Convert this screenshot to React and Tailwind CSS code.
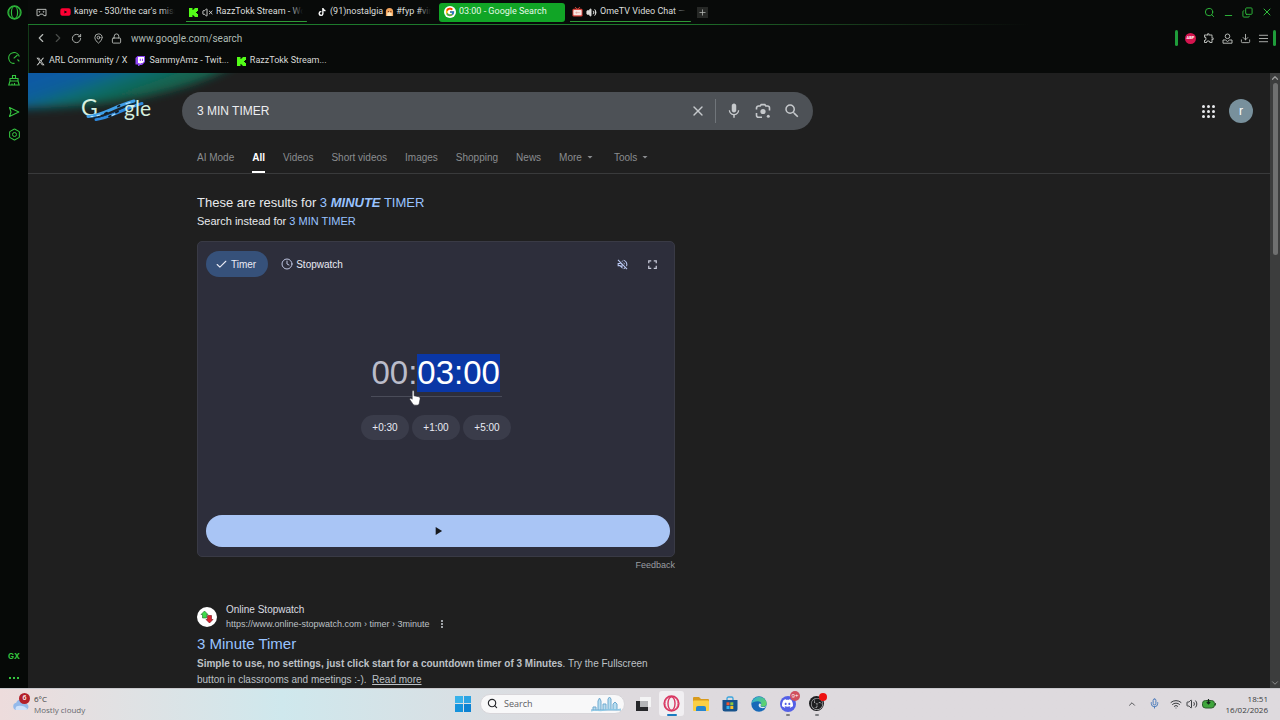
import React, { useEffect, useRef } from "react";
import {
  AlignJustify,
  Check,
  ChevronLeft,
  ChevronRight,
  ChevronUp,
  ChevronDown,
  Clock,
  Copy,
  Download,
  Hexagon,
  Lock,
  MapPin,
  Mic,
  Minus,
  Plus,
  RotateCw,
  Search,
  Volume2,
  VolumeX,
  Wifi,
  X,
} from "lucide-react";
import { FcGoogle } from "react-icons/fc";
import { FaTiktok, FaXTwitter, FaYoutube } from "react-icons/fa6";
import {
  MdArrowDropDown,
  MdFullscreen,
  MdMic,
  MdMoreVert,
  MdOutlineExtension,
  MdOutlineVolumeOff,
  MdPlayArrow,
  MdSearch,
} from "react-icons/md";
import { SiDiscord, SiObsstudio } from "react-icons/si";

const KickIcon = ({ className }) => (
  <svg viewBox="0 0 9 9" className={className} aria-hidden="true">
    <path fill="#53fc18" d="M0 0h3.500v2h1V1h1V0H9v3H8v1H7v1h1v1h1v3H5.500V8h-1V7h-1v2H0z" />
  </svg>
);

const TwitchIcon = ({ className }) => (
  <svg viewBox="0 0 10 10" className={className} aria-hidden="true">
    <path fill="#8e44f5" d="M2.500 0H10v6L7 9H5L4 10H3V8.500H.5V2z" />
    <path fill="#fff" d="M3 1h6v4.500L7.500 7H6L4.700 8.200V7H3z" />
    <path stroke="#8e44f5" d="M5.300 2.700v2.300M7.500 2.700v2.300" />
  </svg>
);

const OperaIcon = ({ className }) => (
  <svg viewBox="0 0 16 16" className={className} fill="none" stroke="currentColor" strokeWidth="1.3" aria-hidden="true">
    <circle cx="8" cy="8" r="7" />
    <ellipse cx="8" cy="8" rx="3.3" ry="6.4" />
    <path d="M5.500 1.800a7.200 7.200 0 0 0 0 12.400M10.500 1.800a7.200 7.200 0 0 1 0 12.400" strokeWidth="0.8" />
  </svg>
);

const TvIcon = ({ className }) => (
  <svg viewBox="0 0 12 11" className={className} aria-hidden="true">
    <path d="M3 0l3 2.400L9 0" stroke="#d9473f" fill="none" />
    <rect x="0.5" y="2" width="11" height="8.5" rx="1.5" fill="#d9473f" />
    <rect x="1.500" y="3.400" width="9" height="5.600" rx="0.8" fill="#f6e6e2" />
    <path d="M3.500 6.200h5M5 5v2.400" stroke="#e0988f" strokeWidth="0.7" />
  </svg>
);

const GhostIcon = ({ className }) => (
  <svg viewBox="0 0 10 10" className={className} aria-hidden="true">
    <path fill="#f2a35c" d="M1 9V4a4 4 0 0 1 8 0v5z" />
    <path fill="#fbe3b8" d="M2.500 8.800V5.500l2-1 3 1.200V8.800z" />
    <circle cx="3.800" cy="3.900" r="0.7" fill="#5b2d12" />
    <circle cx="6.500" cy="3.900" r="0.7" fill="#5b2d12" />
  </svg>
);

const GamepadIcon = ({ className }) => (
  <svg viewBox="0 0 12 10" className={className} fill="none" stroke="currentColor" strokeWidth="1.1" aria-hidden="true">
    <path d="M1 1.500h10v7H8.600L7.500 6.800h-3L3.400 8.500H1z" strokeLinejoin="round" />
    <circle cx="3.700" cy="4.200" r="0.5" />
    <circle cx="8.300" cy="4.200" r="0.5" />
  </svg>
);

const tabs = [
  { title: "kanye - 530/the car's miss", icon: <FaYoutube className="size-3 text-[#ff0033]" /> },
  {
    title: "RazzTokk Stream - Wo",
    icon: <KickIcon className="size-[9px]" />,
    sound: <VolumeX className="size-[11px] shrink-0" />,
    line: true,
  },
  { title: "(91)nostalgia", after: "#fyp #vira", icon: <FaTiktok className="size-2 text-white" /> },
  { title: "03:00 - Google Search", icon: <FcGoogle className="size-[10px]" />, active: true },
  {
    title: "OmeTV Video Chat — (",
    icon: <TvIcon className="h-[10px] w-[11px]" />,
    sound: <Volume2 className="size-[11px] shrink-0" fill="currentColor" />,
    line: true,
  },
];

const Tab = ({ tab }) => (
  <button
    className={`relative flex h-[19px] min-w-0 max-w-[126px] flex-1 items-center gap-[3px] overflow-hidden rounded-[3px] pl-[5px] text-[9px] ${
      tab.active ? "bg-[#11a526] text-[#e4fbe6]" : "text-[#dcdedc]"
    }`}
  >
    <span className={`flex shrink-0 justify-center ${tab.active ? "rounded-full bg-white p-px" : "w-[11px]"}`}>
      {tab.icon}
    </span>
    {tab.sound}
    <span className="flex items-center gap-[2px] whitespace-nowrap">
      {tab.title}
      {tab.after && (
        <>
          <GhostIcon className="size-[9px] shrink-0" />
          {tab.after}
        </>
      )}
    </span>
    {!tab.active && <span className="absolute inset-y-0 right-0 w-5 bg-gradient-to-r from-transparent to-[#080a09] to-70%" />}
    {tab.line && <span className="absolute right-[2px] bottom-0 left-[3px] h-px bg-[#2f9a36]" />}
  </button>
);

const Sidebar = () => (
  <aside className="flex w-7 shrink-0 flex-col items-center bg-[#060907] text-[#35c43f]">
    <button aria-label="Opera menu" className="mt-[5px] text-[#2fbf3c]">
      <OperaIcon className="size-[15px]" />
    </button>
    <button aria-label="GX Control" className="mt-8">
      <svg viewBox="0 0 12 12" className="size-3" fill="none" stroke="currentColor" strokeWidth="1.1">
        <path d="M11.300 4.500A5.400 5.400 0 1 0 6.500 11.400M5.700 6.300 9.500 3M9.500 7.500l1.800 1.800" />
      </svg>
    </button>
    <button aria-label="GX Cleaner" className="mt-[10px]">
      <svg viewBox="0 0 12 12" className="size-3" fill="none" stroke="currentColor" strokeWidth="1.1">
        <path d="M4.500 4.500V1.500h3v3M2 7V4.500h8V7M2 7 .8 11h10.400L10 7zM4 11V9.500M6.500 11V9" />
      </svg>
    </button>
    <button aria-label="Player" className="mt-5">
      <svg viewBox="0 0 12 12" className="size-3" fill="none" stroke="currentColor" strokeWidth="1.1" strokeLinejoin="round">
        <path d="M1.500 1.500 10.800 6l-9.300 4.500L3 6z" />
      </svg>
    </button>
    <button aria-label="Settings" className="relative mt-[10px] flex items-center justify-center">
      <Hexagon className="size-[13px]" />
      <span className="absolute size-[5px] rounded-full border border-current" />
    </button>
    <button className="mt-auto font-['Inter',sans-serif] text-[8px] leading-3 font-bold">GX</button>
    <button aria-label="More" className="mt-[14px] mb-2 flex gap-[2px] py-px">
      <span className="size-[2px] bg-current" />
      <span className="size-[2px] bg-current" />
      <span className="size-[2px] bg-current" />
    </button>
  </aside>
);

const TabStrip = () => (
  <div className="flex h-6 shrink-0 items-center">
    <button aria-label="Workspace" className="ml-2 text-[#b9bcb9]">
      <GamepadIcon className="h-[9px] w-[11px]" />
    </button>
    <div className="ml-2 flex min-w-0 max-w-[638px] flex-1 gap-[2px]">
      {tabs.map((t) => (
        <Tab key={t.title} tab={t} />
      ))}
    </div>
    <button aria-label="New tab" className="ml-1 flex size-[11px] items-center justify-center bg-[#262826] text-[#b9bcb9]">
      <Plus className="size-[9px]" />
    </button>
    <div className="ml-auto flex items-center gap-2 pr-[7px] text-[#2fbf3c]">
      <button aria-label="Search tabs"><Search className="size-[11px]" /></button>
      <button aria-label="Minimize" className="pt-1.5"><Minus className="size-[11px]" /></button>
      <button aria-label="Restore"><Copy className="size-[11px] -scale-x-100 rotate-180" /></button>
      <button aria-label="Close"><X className="size-3" /></button>
    </div>
  </div>
);

const Toolbar = () => (
  <div className="flex h-[26px] shrink-0 items-center text-[#b6b9b6]">
    <button aria-label="Back" className="ml-[5px]"><ChevronLeft className="size-[14px]" /></button>
    <button aria-label="Forward" className="ml-[3px] text-[#4a4d4a]"><ChevronRight className="size-[14px]" /></button>
    <button aria-label="Reload" className="ml-[6px]"><RotateCw className="size-[11px]" /></button>
    <MapPin className="ml-[11px] size-[11px]" />
    <Lock className="ml-[7px] size-[11px]" />
    <input
      aria-label="Address"
      defaultValue="www.google.com/search"
      className="ml-[9px] min-w-0 flex-1 bg-transparent text-[10px] text-[#aebab4] outline-none"
    />
    <div className="flex items-center gap-[7px] pr-1">
      <span className="h-4 w-[3px] rounded-sm bg-[#1f9c3a]" />
      <button className="flex size-[11px] items-center justify-center rounded-full bg-[#d4144e] text-[4px] font-bold text-white">
        ABP
      </button>
      <button aria-label="Extensions"><MdOutlineExtension className="size-3" /></button>
      <button aria-label="Profile">
        <svg viewBox="0 0 11 11" className="size-[11px]" fill="none" stroke="currentColor">
          <circle cx="5.500" cy="3.300" r="2.300" />
          <path d="M1 7h2.500l2 1.500 2-1.500H10v3.200H1z" />
        </svg>
      </button>
      <button aria-label="Downloads"><Download className="size-[11px]" /></button>
      <div className="flex items-center gap-1">
        <button aria-label="Easy setup"><AlignJustify className="size-[11px]" /></button>
        <span className="h-4 w-[3px] rounded-sm bg-[#1f9c3a]" />
      </div>
    </div>
  </div>
);

const bookmarks = [
  { label: "ARL Community / X", icon: <FaXTwitter className="size-[9px]" /> },
  { label: "SammyAmz - Twit...", icon: <TwitchIcon className="size-[10px]" /> },
  { label: "RazzTokk Stream...", icon: <KickIcon className="size-[9px]" /> },
];

const Bookmarks = () => (
  <div className="flex h-[22px] shrink-0 items-center gap-2 pb-[2px] pl-[7px] text-[9px] text-[#d8dad8]">
    {bookmarks.map((b) => (
      <a key={b.label} href="#bookmark" className="flex items-center gap-1 whitespace-nowrap">
        {b.icon}
        {b.label}
      </a>
    ))}
  </div>
);

const Aurora = () => (
  <svg viewBox="0 0 250 70" className="pointer-events-none absolute top-0 left-0 h-[70px] w-[250px]" aria-hidden="true">
    <defs>
      <linearGradient id="aurora" gradientUnits="userSpaceOnUse" x1="30" y1="0" x2="44" y2="40">
        <stop offset="0" stopColor="#0b5aa4" />
        <stop offset="0.35" stopColor="#0c5f98" />
        <stop offset="0.65" stopColor="#0f6d70" />
        <stop offset="1" stopColor="#12644f" />
      </linearGradient>
      <filter id="soft" x="-20%" y="-60%" width="140%" height="220%">
        <feGaussianBlur stdDeviation="5" />
      </filter>
    </defs>
    <path d="M-30-30H235C200 2 165 12 120 23 70 33 30 35-30 36z" fill="url(#aurora)" filter="url(#soft)" />
  </svg>
);

const Logo = () => (
  <a href="#home" aria-label="Google" className="shrink-0">
    <svg viewBox="0 0 72 28" className="h-7 w-[72px] overflow-visible">
      <text x="0" y="19" fontSize="23" fill="#d5efdf" fontFamily="Lato, sans-serif">G</text>
      <g fill="none" strokeLinecap="round">
        <path d="M7 19.500C22 18.500 32 9.500 53 4" stroke="#3f9fe8" strokeWidth="3" />
        <path d="M15 22.500C30 20.500 42 11.500 61 6.500" stroke="#2f8ade" strokeWidth="3" />
        <path d="M12 21.300C28 19.500 38 10.500 58 5.300" stroke="#0f2c4c" strokeWidth="0.9" />
        <path d="M24 16.500l2-.8M35 15.500l2-1M28 19.500l2-.8M37 9.500l1.500-.7" stroke="#111a22" strokeWidth="1.800" />
        <path d="M16 18.600l3-.6M45 6.800l4-1.400M31 18.500l3-1.500M10 19.500h2" stroke="#b4e2fa" strokeWidth="1.100" />
      </g>
      <text x="43" y="19" fontSize="21" fill="#d5efdf" fontFamily="Lato, sans-serif">gle</text>
    </svg>
  </a>
);

const LensIcon = ({ className }) => (
  <svg viewBox="0 0 18 18" className={className} fill="none" stroke="currentColor" strokeWidth="1.600" aria-hidden="true">
    <path d="M2.500 7.500V6a2 2 0 0 1 2-2h1.700l1-1.400h3.600l1 1.400h1.700a2 2 0 0 1 2 2v2.500M2.500 11v2.300a2 2 0 0 0 2 2H8" />
    <circle cx="9" cy="9.500" r="2.600" fill="currentColor" stroke="none" />
    <circle cx="14.300" cy="14.300" r="1.500" fill="currentColor" stroke="none" />
  </svg>
);

const SearchHeader = () => (
  <div className="relative flex items-center pt-[19px] pr-[17px] pl-[53px]">
    <Logo />
    <form className="ml-[29px] flex h-[38px] min-w-0 max-w-[631px] flex-1 items-center rounded-full bg-[#4d5156] pr-3 pl-[15px] text-[#c6c9cc]">
      <input
        aria-label="Search"
        defaultValue="3 MIN TIMER"
        className="min-w-0 flex-1 bg-transparent text-xs text-[#eceef0] outline-none"
      />
      <button type="button" aria-label="Clear"><X className="size-4" /></button>
      <span className="mx-[9px] h-6 w-px bg-[#70757a]" />
      <button type="button" aria-label="Search by voice"><MdMic className="size-[18px]" /></button>
      <button type="button" aria-label="Search by image" className="ml-[11px]"><LensIcon className="size-[18px]" /></button>
      <button type="button" aria-label="Submit search" className="ml-[11px]"><MdSearch className="size-[18px]" /></button>
    </form>
    <button aria-label="Google apps" className="ml-auto grid grid-cols-3 gap-[2px]">
      {[0, 1, 2, 3, 4, 5, 6, 7, 8].map((n) => (
        <span key={n} className="size-[3px] rounded-full bg-[#e8eaed]" />
      ))}
    </button>
    <button className="ml-[14px] size-6 rounded-full bg-[#78909c] text-xs text-white">r</button>
  </div>
);

const filters = ["AI Mode", "All", "Videos", "Short videos", "Images", "Shopping", "News", "More", "Tools"];

const FilterNav = () => (
  <nav className="relative flex h-11 gap-[18px] border-b border-[#393a3b] pl-[169px] text-[10px] text-[#8a8d90]">
    {filters.map((f) => (
      <a
        key={f}
        href={`#${f}`}
        className={`flex items-center whitespace-nowrap ${
          f === "All" ? "border-b-2 border-white pt-[13px] font-bold text-white" : "pt-[11px]"
        }`}
      >
        {f}
        {(f === "More" || f === "Tools") && <MdArrowDropDown className="ml-[2px] size-3" />}
      </a>
    ))}
  </nav>
);

const HandCursor = () => (
  <svg viewBox="0 0 12 16" className="pointer-events-none absolute top-[36px] left-[38px] h-4 w-3" aria-hidden="true">
    <path
      d="M3.200 1.500c0-1.200 1.900-1.200 1.900 0v4.300l4.400.9c1.300.3 1.800 1 1.600 2.300l-.8 4.200c-.2 1.300-.9 2-2.200 2H6c-1 0-1.600-.4-2.200-1.300L.9 9.700c-.6-1 .5-1.900 1.400-1.200l.9.800z"
      fill="#fff"
      stroke="#2a2a33"
      strokeWidth="0.600"
    />
  </svg>
);

const TimerCard = () => {
  const input = useRef(null);

  useEffect(() => {
    input.current.focus();
    input.current.setSelectionRange(3, 8);
  }, []);

  return (
    <section className="flex flex-col rounded-[5px] border border-[#393a45] bg-[#2d2e3b] py-[9px] pr-1 pl-2 text-[10px] text-[#e9ebf5]">
      <div className="flex items-center">
        <button className="flex h-[26px] items-center gap-[3px] rounded-full bg-[#36517a] pr-3 pl-[9px]">
          <Check className="size-[13px]" />
          Timer
        </button>
        <button className="ml-[13px] flex h-[26px] items-center gap-[3px]">
          <Clock className="size-3 text-[#bfc6e2]" />
          Stopwatch
        </button>
        <button aria-label="Unmute" className="ml-auto text-[#b9c8f2]"><MdOutlineVolumeOff className="size-[13px]" /></button>
        <button aria-label="Fullscreen" className="mr-[10px] ml-4 text-[#c6c9d8]"><MdFullscreen className="size-[15px]" /></button>
      </div>
      <div className="flex flex-col items-center pr-1">
        <div className="relative mt-[77px] w-[131px] border-b border-[#4a4c59] pb-1">
          <input
            ref={input}
            aria-label="Time"
            defaultValue="00:03:00"
            className="block h-[38px] w-full bg-transparent pl-px text-[33px] leading-[38px] text-[#babcca] caret-transparent outline-none selection:bg-[#0a38a8]/99 selection:text-white"
          />
          <HandCursor />
        </div>
        <div className="mt-[18px] flex gap-[3px]">
          {["+0:30", "+1:00", "+5:00"].map((step) => (
            <button key={step} className="h-[25px] w-12 rounded-full bg-[#3a3c4a]">
              {step}
            </button>
          ))}
        </div>
      </div>
      <button aria-label="Start" className="mt-[75px] flex h-8 items-center justify-center rounded-full bg-[#a9c5f5] text-[#16181d]">
        <MdPlayArrow className="size-[14px]" />
      </button>
    </section>
  );
};

const Results = () => (
  <main className="ml-[169px] max-w-[478px] pt-5">
    <p className="text-[13px] leading-[18px] text-[#e8eaed]">
      These are results for{" "}
      <a href="#minute" className="text-[#99c3ff]">
        3 <b><i>MINUTE</i></b> TIMER
      </a>
    </p>
    <p className="mb-[11px] text-[11px] leading-[18px] text-[#e8eaed]">
      Search instead for <a href="#min" className="text-[#99c3ff]">3 MIN TIMER</a>
    </p>
    <TimerCard />
    <div className="text-right text-[9px] leading-4 text-[#9a9da1]">
      <a href="#feedback">Feedback</a>
    </div>
    <article className="mt-[30px]">
      <div className="flex items-center">
        <span className="mr-[9px] flex size-5 items-center justify-center rounded-full bg-white">
          <svg viewBox="0 0 14 14" className="size-[14px]" aria-hidden="true">
            <path d="M4.500 1 8 4.500H6.500V8h-4V4.500H1z" fill="#3ddc4a" stroke="#1e6b2a" strokeWidth="0.600" />
            <path d="M9.500 13 6 9.500h1.500V5.500h4v4H13z" fill="#d9232e" stroke="#6e1219" strokeWidth="0.600" />
          </svg>
        </span>
        <div>
          <div className="text-[10px] leading-[14px] text-[#dadce0]">Online Stopwatch</div>
          <cite className="block text-[9px] leading-[14px] text-[#bdc1c6] not-italic">
            https://www.online-stopwatch.com › timer › 3minute
          </cite>
        </div>
        <button aria-label="About this result" className="mt-[14px] ml-[6px] text-[#bdc1c6]">
          <MdMoreVert className="size-3" />
        </button>
      </div>
      <h3 className="mt-[3px] text-[15px] leading-5 text-[#99c3ff]">
        <a href="#result">3 Minute Timer</a>
      </h3>
      <p className="mt-[2px] text-[10px] leading-4 text-[#bdc1c6]">
        <b>Simple to use, no settings, just click start for a countdown timer of 3 Minutes</b>. Try the Fullscreen
        button in classrooms and meetings :-).&nbsp; <a href="#more" className="underline">Read more</a>
      </p>
    </article>
  </main>
);

const Scrollbar = () => (
  <div className="flex w-[10px] shrink-0 flex-col items-center bg-[#3c3d3d] text-[#9b9c9c]">
    <ChevronUp className="size-[10px]" strokeWidth={3} />
    <div className="h-[172px] w-[5px] rounded-full bg-[#6f7070]" />
    <ChevronDown className="mt-auto size-[10px]" />
  </div>
);

const TaskButton = ({ label, active, running, children }) => (
  <button
    aria-label={label}
    className={`relative flex h-[25px] w-[25px] items-center justify-center rounded-[3px] ${active ? "bg-[#f1eff2]" : ""}`}
  >
    {children}
    {active && <span className="absolute bottom-0 h-[2px] w-[10px] rounded-full bg-[#1a7ac0]" />}
    {running && <span className="absolute bottom-0 h-[2px] w-1 rounded-full bg-[#7d7e82]" />}
  </button>
);

const Taskbar = () => (
  <footer className="grid h-8 shrink-0 grid-cols-[1fr_auto_1fr] items-center border-t border-[#c9c9cd] bg-gradient-to-r from-[#eddcdc] via-[#cfe8ed] via-22% to-[#dedade] to-45% pb-[2px] font-['Open_Sans',sans-serif] text-[8px] text-[#3a3c40]">
    <div className="flex items-center gap-1 pl-3">
      <span className="relative">
        <svg viewBox="0 0 18 14" className="h-[14px] w-[18px]" aria-hidden="true">
          <path d="M4.500 13a3.700 3.700 0 0 1-.3-7.300 5 5 0 0 1 9.500.8A3.300 3.300 0 0 1 13.700 13z" fill="#94b9ea" />
          <path d="M4 13a2.500 2.500 0 0 1 2-4c3-1 7 0 9.500 3-.5.700-1 1-1.800 1z" fill="#cfe1fa" />
        </svg>
        <span className="absolute -top-1 right-0 flex size-[11px] items-center justify-center rounded-full bg-[#b3202a] text-[7px] font-semibold text-white">
          6
        </span>
      </span>
      <div className="leading-[11px]">
        <div>6°C</div>
        <div className="text-[#66696e]">Mostly cloudy</div>
      </div>
    </div>
    <div className="flex items-center pl-1">
      <button aria-label="Start menu" className="grid size-4 grid-cols-2 gap-px">
        <span className="bg-[#38b2ea]" />
        <span className="bg-[#2ca4e4]" />
        <span className="bg-[#1593dc]" />
        <span className="bg-[#0c82d2]" />
      </button>
      <label className="mr-[5px] ml-[9px] flex h-5 w-[145px] items-center rounded-full border border-[#d8d6da] bg-[#f8f8f9] pl-1.5">
        <Search className="size-[11px] shrink-0 text-[#26282c]" strokeWidth={2.500} />
        <input aria-label="Search" placeholder="Search" className="ml-1.5 min-w-0 flex-1 bg-transparent text-[9px] outline-none placeholder:text-[#5e6064]" />
        <svg viewBox="0 0 32 16" className="mr-[2px] h-4 w-8" aria-hidden="true">
          <path d="M1 14h30M3 14v-3h3v3M8 14V5l1.500-3L11 5v9M13 14V8h3v6M18 14V3l1.500-2L21 3v11M23 14V8l2-2 2 2v6" fill="#b9def0" stroke="#6fa9cf" strokeWidth="1" />
          <path d="M1 15c5-2 8 1 14-1s10 1 16-1" stroke="#8cc8e6" fill="none" />
        </svg>
      </label>
      <div className="flex gap-1">
        <TaskButton label="Task view">
          <svg viewBox="0 0 16 16" className="size-4">
            <rect x="5" y="1" width="11" height="10" fill="#f4f4f5" />
            <path d="M1 5h4v6h8v4H1z" fill="#26272a" />
            <path d="M5 5h8v6H5z" fill="#b4b5b8" />
          </svg>
        </TaskButton>
        <TaskButton label="Opera GX" active>
          <OperaIcon className="size-[17px] text-[#d93460]" />
        </TaskButton>
        <TaskButton label="File Explorer">
          <svg viewBox="0 0 18 16" className="h-4 w-[18px]">
            <path d="M1 2a1 1 0 0 1 1-1h5l2 2h7a1 1 0 0 1 1 1v4H1z" fill="#d89a1c" />
            <rect x="1" y="4.500" width="16" height="10.500" rx="1" fill="#fbcf45" />
            <path d="M4 15v-3a2 2 0 0 1 2-2h6a2 2 0 0 1 2 2v3z" fill="#2686cf" />
          </svg>
        </TaskButton>
        <TaskButton label="Microsoft Store">
          <svg viewBox="0 0 16 16" className="size-4">
            <path d="M5 5V2.500A1.500 1.500 0 0 1 6.500 1h3A1.500 1.500 0 0 1 11 2.500V5" fill="none" stroke="#3ba5dd" strokeWidth="1.300" />
            <path d="M.5 4h15v9a2.500 2.500 0 0 1-2.500 2.500H3A2.500 2.500 0 0 1 .5 13z" fill="#17528c" />
            <path d="M4.500 6.300h3v3h-3z" fill="#f2552c" />
            <path d="M8.300 6.300h3v3h-3z" fill="#8cc63f" />
            <path d="M4.500 10h3v3h-3z" fill="#2fb4f0" />
            <path d="M8.300 10h3v3h-3z" fill="#fbbf24" />
          </svg>
        </TaskButton>
        <TaskButton label="Edge">
          <svg viewBox="0 0 16 16" className="size-4">
            <defs>
              <linearGradient id="edge" x1="0" y1="0" x2="1" y2="0.500">
                <stop offset="0" stopColor="#2aa8e0" />
                <stop offset="1" stopColor="#5ed36c" />
              </linearGradient>
            </defs>
            <circle cx="8" cy="8" r="7.700" fill="#1769b8" />
            <path d="M.4 8A7.700 7.700 0 0 1 15.700 7.300c0 2.200-1.700 3.400-3.700 3.400s-2.700-.9-2-1.800C10.700 7 9.500 5.200 6.800 5.200 3.800 5.200 1.300 6 .4 8z" fill="url(#edge)" />
            <path d="M9.800 9.200c-.6.900.3 1.800 2.300 1.800 1.700 0 2.600-.4 3.600-1.200-.6 1.600-2.800 2.600-4.900 2.300-2-.3-3.500-1.500-3.100-3.400.3-1 .9-1.300 1.400-1.200.9.200 1.100 1 .7 1.700z" fill="#dce9f2" />
          </svg>
        </TaskButton>
        <TaskButton label="Discord" running>
          <span className="flex size-4 items-center justify-center rounded-full bg-[#5460e6] text-white">
            <SiDiscord className="size-[11px]" />
          </span>
          <span className="absolute top-0 right-0 flex size-[10px] items-center justify-center rounded-full bg-[#d0505e] text-[6px] text-white">
            9+
          </span>
        </TaskButton>
        <TaskButton label="OBS Studio" running>
          <span className="flex size-[15px] items-center justify-center rounded-full bg-[#1d1e20] text-[#c9cacd]">
            <SiObsstudio className="size-3" />
          </span>
          <span className="absolute top-[2px] right-[2px] size-2 rounded-full bg-[#ee1111]" />
        </TaskButton>
      </div>
    </div>
    <div className="flex items-center justify-end pr-3">
      <button aria-label="Hidden icons"><ChevronUp className="size-[10px]" /></button>
      <Mic className="ml-3 size-[11px] text-[#3f74b8]" />
      <Wifi className="ml-[10px] size-3" />
      <Volume2 className="ml-1 size-3" />
      <svg viewBox="0 0 14 10" className="ml-1 h-[10px] w-[14px]" aria-hidden="true">
        <rect x="0.500" y="1.500" width="12" height="7.500" rx="3" fill="#3fa63c" stroke="#2c5c2c" />
        <path d="M13.500 4v2.500" stroke="#2c5c2c" />
        <path d="M6.500 0v4.500M4.800 3l1.700 1.800L8.200 3" stroke="#14261a" fill="none" strokeWidth="1.200" />
      </svg>
      <div className="ml-[10px] text-right leading-[11px]">
        <div>18:51</div>
        <div>16/02/2026</div>
      </div>
    </div>
  </footer>
);

const App = () => (
  <div className="flex h-screen flex-col overflow-hidden bg-[#080a09] font-['Liberation_Sans',Arial,sans-serif]">
    <div className="flex min-h-0 flex-1">
      <Sidebar />
      <div className="flex min-w-0 flex-1 flex-col">
        <div className="flex flex-col font-['Roboto',sans-serif]">
          <TabStrip />
          <div className="h-px bg-gradient-to-r from-[#1d7a2c] from-50% to-[#080a09] to-80%" />
          <div className="border-l border-[#123a18]">
            <Toolbar />
            <Bookmarks />
          </div>
        </div>
        <div className="flex min-h-0 flex-1">
          <div className="relative min-w-0 flex-1 overflow-hidden bg-[#1f1f1f]">
            <Aurora />
            <SearchHeader />
            <FilterNav />
            <Results />
          </div>
          <Scrollbar />
        </div>
      </div>
    </div>
    <Taskbar />
  </div>
);

export default App;
